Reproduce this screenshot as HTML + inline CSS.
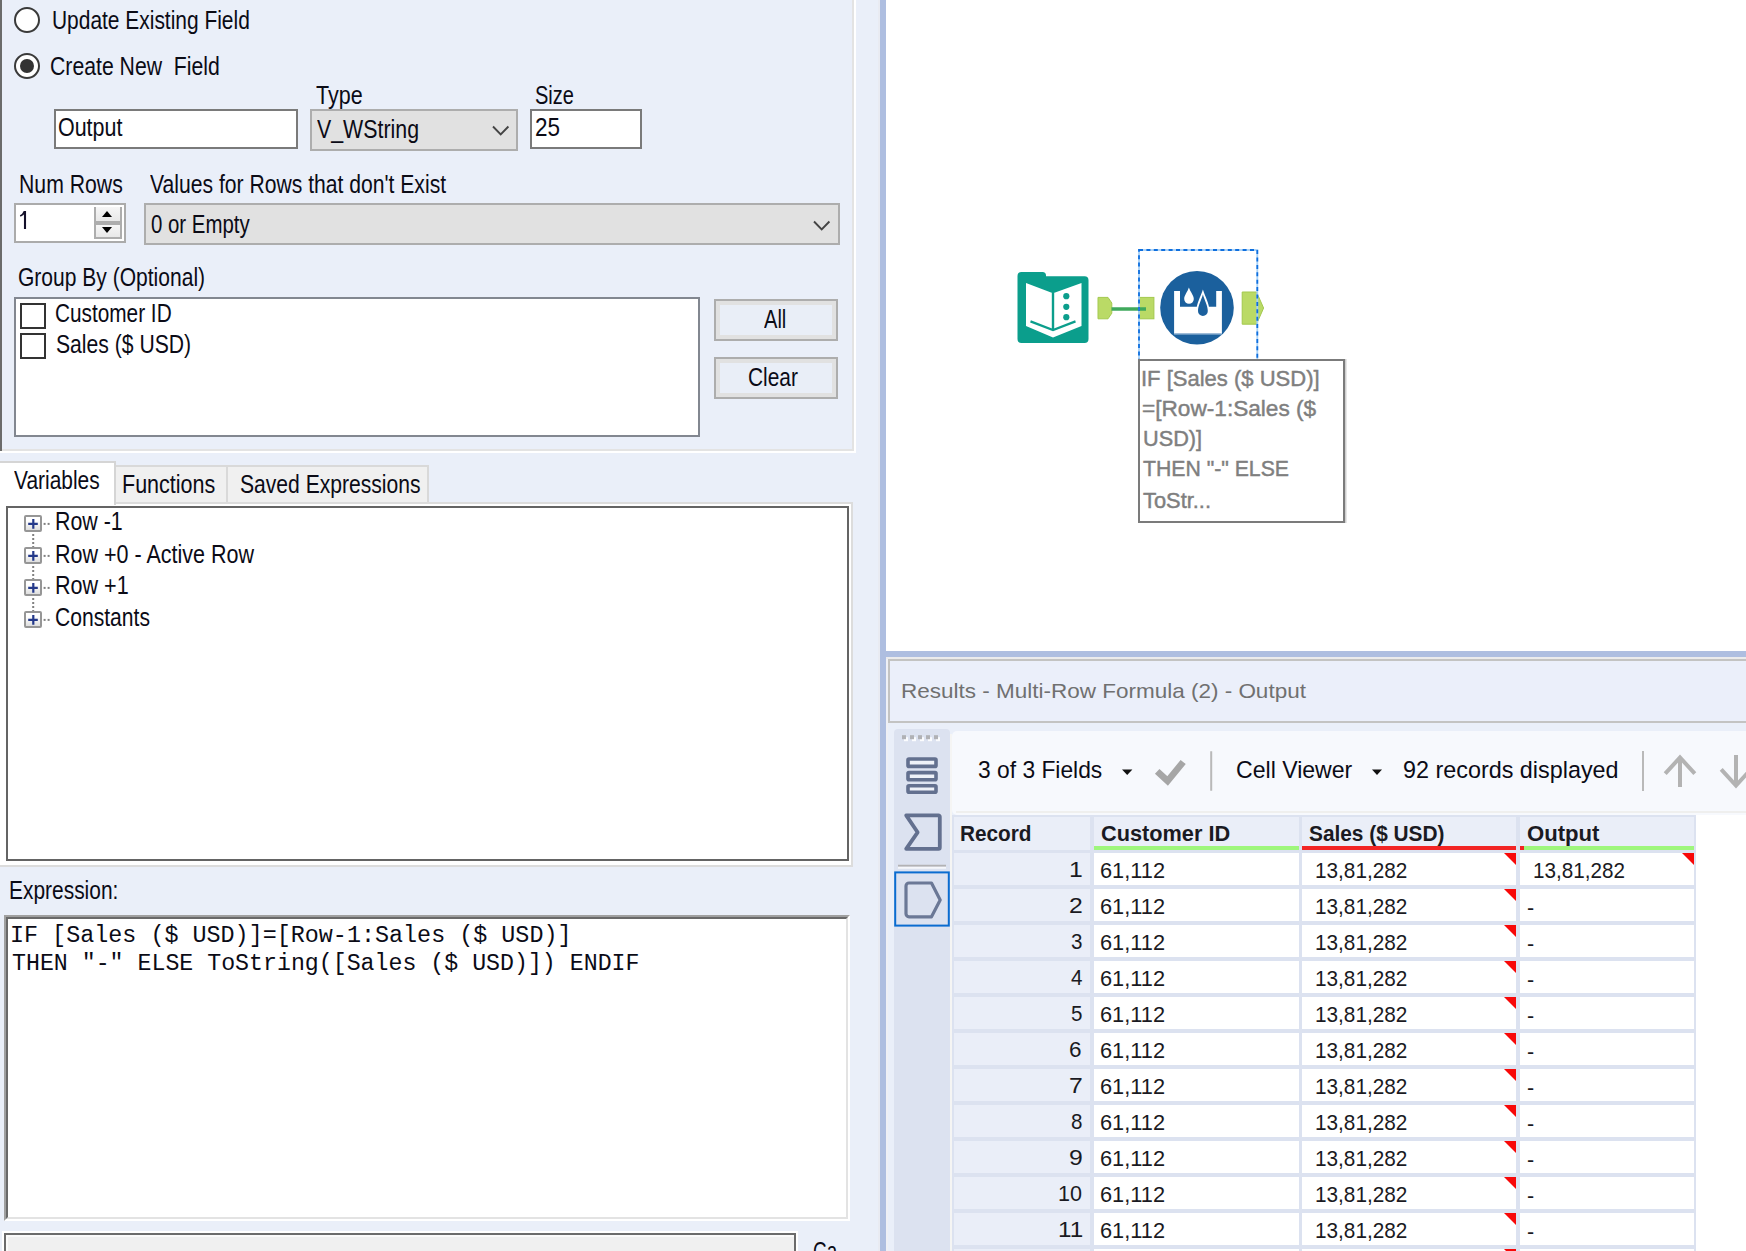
<!DOCTYPE html>
<html><head><meta charset="utf-8"><title>Alteryx Multi-Row Formula</title>
<style>
html,body{margin:0;padding:0}
body{width:1746px;height:1251px;overflow:hidden;position:relative;background:#eaeff9;font-family:"Liberation Sans",sans-serif}
.a{position:absolute;box-sizing:border-box}
.t{position:absolute;white-space:pre;line-height:1;transform-origin:0 0;letter-spacing:0}
.tb{background:#fff;border:2px solid #7a7a7a}
.cb{background:#e1e1e1;border:2px solid #adadad}
.btn{background:#e9eef7;border:2px solid #adadad;box-shadow:inset 0 0 0 4px #e1e1e1}
.chk{background:#fff;border:2px solid #333}
.plus{background:linear-gradient(#fff 30%,#dedede);border:2px solid #969696;border-radius:2px}
.cell{position:absolute;box-sizing:border-box;height:32px;background:#fff}
.rc{background:#eaeef8}
svg{position:absolute;overflow:visible}

</style></head>
<body>
<!-- ===== LEFT CONFIG PANEL ===== -->
<div class="a" style="left:0;top:0;width:2px;height:451px;background:#6b6b6b"></div>
<div class="a" style="left:2px;top:449px;width:852px;height:2px;background:#e3e3e3"></div>
<div class="a" style="left:852px;top:0;width:2px;height:451px;background:#e3e3e3"></div>
<div class="a" style="left:0;top:451px;width:856px;height:2px;background:#fff"></div>
<div class="a" style="left:854px;top:0;width:2px;height:453px;background:#fff"></div>
<!-- radios -->
<div class="a" style="left:14px;top:6.9px;width:26.2px;height:26.2px;border-radius:50%;background:#fff;border:2px solid #3a3a3a"></div>
<div class="a" style="left:14px;top:52.8px;width:26.2px;height:26.2px;border-radius:50%;background:#fff;border:2px solid #3a3a3a"></div>
<div class="a" style="left:20.1px;top:59px;width:13.8px;height:13.8px;border-radius:50%;background:#333"></div>
<!-- inputs -->
<div class="a tb" style="left:54px;top:109px;width:244px;height:40px"></div>
<div class="a cb" style="left:310px;top:109px;width:208px;height:41.5px"></div>
<svg style="left:491.5px;top:125px" width="18" height="12" viewBox="0 0 18 12"><path d="M1 1.5 L8.7 9.4 L16.4 1.5" fill="none" stroke="#444" stroke-width="1.9"/></svg>
<div class="a tb" style="left:530px;top:109px;width:112px;height:40px"></div>
<div class="a" style="left:14px;top:203.4px;width:111.8px;height:39.4px;background:#fff;border:2px solid #ababab"></div>
<div class="a" style="left:94px;top:207.2px;width:28.2px;height:31.6px;background:#adadad"></div>
<div class="a" style="left:96px;top:207.2px;width:24.2px;height:13.8px;background:linear-gradient(#f6f6f6,#e8e8e8)"></div>
<div class="a" style="left:96px;top:224.8px;width:24.2px;height:12px;background:linear-gradient(#f6f6f6,#e8e8e8)"></div>
<svg style="left:102px;top:211px" width="10" height="6" viewBox="0 0 10 6"><path d="M0 6 L5 0 L10 6Z" fill="#000"/></svg>
<svg style="left:102px;top:227px" width="10" height="6" viewBox="0 0 10 6"><path d="M0 0 L5 6 L10 0Z" fill="#000"/></svg>
<svg style="left:0;top:0" width="40" height="240"><path d="M25 211 V229" stroke="#14102a" stroke-width="2.1" fill="none"/><path d="M20.2 216 Q23.4 214.8 24.6 211.4" stroke="#14102a" stroke-width="1.8" fill="none"/></svg>
<div class="a cb" style="left:144px;top:203px;width:696px;height:41.8px"></div>
<svg style="left:813.3px;top:219.5px" width="18" height="12" viewBox="0 0 18 12"><path d="M1 1.5 L8.7 9.4 L16.4 1.5" fill="none" stroke="#444" stroke-width="1.9"/></svg>
<!-- group by list -->
<div class="a" style="left:14px;top:297px;width:686px;height:140px;background:#fff;border:2px solid #828790"></div>
<div class="a chk" style="left:20px;top:303px;width:26px;height:26px"></div>
<div class="a chk" style="left:20px;top:333px;width:26px;height:26px"></div>
<div class="a btn" style="left:714px;top:299px;width:124px;height:41.6px"></div>
<div class="a btn" style="left:714px;top:357px;width:124px;height:41.6px"></div>
<!-- tabs -->
<div class="a" style="left:0;top:501.5px;width:853px;height:365.5px;background:#fff;border:2px solid #dcdcdc;border-left:none"></div>
<div class="a" style="left:114px;top:465.4px;width:113.5px;height:36.4px;background:#f0f0f0;border:2px solid #d9d9d9;border-bottom:none"></div>
<div class="a" style="left:225.5px;top:465.4px;width:203px;height:36.4px;background:#f0f0f0;border:2px solid #d9d9d9;border-bottom:none"></div>
<div class="a" style="left:0;top:461.3px;width:116px;height:43.5px;background:#fff;border-top:2px solid #d5d5d5;border-right:2px solid #d5d5d5"></div>
<div class="a" style="left:0;top:501px;width:114px;height:4px;background:#fff"></div>
<div class="a" style="left:6px;top:505.7px;width:843px;height:355.5px;background:#fff;border:2px solid #646464"></div>
<!-- tree -->
<svg style="left:0;top:0" width="100" height="700">
 <g fill="#808080"><rect x="43.6" y="522.9" width="2" height="2"/><rect x="47.6" y="522.9" width="2" height="2"/><rect x="43.6" y="554.9" width="2" height="2"/><rect x="47.6" y="554.9" width="2" height="2"/><rect x="43.6" y="586.9" width="2" height="2"/><rect x="47.6" y="586.9" width="2" height="2"/><rect x="43.6" y="618.9" width="2" height="2"/><rect x="47.6" y="618.9" width="2" height="2"/><rect x="32.2" y="534.0" width="2" height="2"/><rect x="32.2" y="538.0" width="2" height="2"/><rect x="32.2" y="542.0" width="2" height="2"/><rect x="32.2" y="546.0" width="2" height="2"/><rect x="32.2" y="566.0" width="2" height="2"/><rect x="32.2" y="570.0" width="2" height="2"/><rect x="32.2" y="574.0" width="2" height="2"/><rect x="32.2" y="578.0" width="2" height="2"/><rect x="32.2" y="598.0" width="2" height="2"/><rect x="32.2" y="602.0" width="2" height="2"/><rect x="32.2" y="606.0" width="2" height="2"/><rect x="32.2" y="610.0" width="2" height="2"/></g>
</svg>
<div class="a plus" style="left:24px;top:515.3px;width:17.6px;height:17.2px"></div>
<div class="a plus" style="left:24px;top:547.3px;width:17.6px;height:17.2px"></div>
<div class="a plus" style="left:24px;top:579.3px;width:17.6px;height:17.2px"></div>
<div class="a plus" style="left:24px;top:611.3px;width:17.6px;height:17.2px"></div>
<svg style="left:0;top:0" width="100" height="700">
 <g stroke="#24398a" stroke-width="2.2"><path d="M28.2 523.9 H37.8 M33.3 519.1 V528.6999999999999"/><path d="M28.2 555.9 H37.8 M33.3 551.1 V560.6999999999999"/><path d="M28.2 587.9 H37.8 M33.3 583.1 V592.6999999999999"/><path d="M28.2 619.9 H37.8 M33.3 615.1 V624.6999999999999"/></g>
</svg>
<!-- expression -->
<div class="a" style="left:4px;top:915px;width:846px;height:306px;background:#fff;border-style:solid;border-width:2px;border-color:#a0a0a0 #fff #fff #a0a0a0"></div>
<div class="a" style="left:6px;top:917px;width:842px;height:302px;background:#fff;border-style:solid;border-width:2px;border-color:#696969 #e3e3e3 #e3e3e3 #696969"></div>
<div class="a" style="left:2px;top:1231px;width:796px;height:30px;background:#f0f0f0;border:2px solid #fff"></div>
<div class="a" style="left:4px;top:1233px;width:792px;height:30px;background:#f0f0f0;border:2px solid #6b6b6b;box-shadow:inset 2px 2px 0 #fafafa"></div>

<!-- ===== SPLITTERS / CANVAS ===== -->
<div class="a" style="left:886px;top:0;width:860px;height:651px;background:#fff"></div>
<div class="a" style="left:878px;top:0;width:2px;height:1251px;background:#e9ebf2"></div>
<div class="a" style="left:880px;top:0;width:6px;height:1251px;background:#aebee0"></div>
<div class="a" style="left:886px;top:651px;width:860px;height:6px;background:#aebee0"></div>
<div class="a" style="left:886px;top:657px;width:860px;height:2px;background:#ebebec"></div>
<div class="a" style="left:886px;top:659px;width:2px;height:600px;background:#eff0f5"></div>

<!-- canvas tools -->
<svg style="left:0;top:0" width="1746" height="660">
 <!-- book tool -->
 <path d="M1017.5 276 a4 4 0 0 1 4-4 h21 a3.5 3.5 0 0 1 3.5 3.5 v0.8 h38.5 a4 4 0 0 1 4 4 v58.7 a4 4 0 0 1 -4 4 h-63 a4 4 0 0 1 -4-4 z" fill="#0b9e8c"/>
 <path d="M1026 283 L1053 293.2 L1081.5 283 V326 L1053 337.6 L1026 326 Z" fill="#fff"/>
 <path d="M1053 293 V330" stroke="#0b9e8c" stroke-width="2.4" fill="none"/>
 <path d="M1030.5 321.4 L1053 330 L1075.5 321.4" stroke="#0b9e8c" stroke-width="2.2" fill="none"/>
 <circle cx="1066.3" cy="296.2" r="3.1" fill="#0b9e8c"/><circle cx="1066.3" cy="306.8" r="3.1" fill="#0b9e8c"/><circle cx="1066.3" cy="317.2" r="3.1" fill="#0b9e8c"/>
 <!-- connection -->
 <path d="M1098 297.4 H1108 L1111.8 303 V313.2 L1108 318.8 H1098 Z" fill="#bada66" stroke="#a3c94e" stroke-width="1"/>
 <rect x="1138.6" y="297.4" width="15.3" height="21.4" fill="#bada66" stroke="#a3c94e" stroke-width="1"/>
 <path d="M1111.5 309 H1146" stroke="#3fa95c" stroke-width="3.6" fill="none"/>
 <!-- multi-row tool -->
 <circle cx="1197" cy="307.7" r="36.8" fill="#1b609d"/>
 <path d="M1174.1 290.9 H1180 V306.8 H1216.2 V290.9 H1221.9 V334 H1174.1 Z" fill="#fff"/>
 <path d="M1174.1 334 H1221.9" stroke="#7fa6cb" stroke-width="1.4"/>
 <path d="M1188.9 287.6 C1187.5 292 1184.2 295.5 1184.2 299 a4.7 4.7 0 0 0 9.6 0 C1193.8 295.5 1190.3 292 1188.9 287.6 Z" fill="#fff"/>
 <path d="M1202.9 289.5 C1200.6 297 1196.4 303.5 1196.4 310.8 a6.5 6.5 0 0 0 13 0 C1209.4 303.5 1205.2 297 1202.9 289.5 Z" fill="#fff"/>
 <path d="M1202.9 294.5 C1201.2 300.5 1198 305.5 1198 311 a4.9 4.9 0 0 0 9.8 0 C1207.8 305.5 1204.6 300.5 1202.9 294.5 Z" fill="#1b609d"/>
 <path d="M1242.2 292 H1256.5 L1263.6 308 L1256.5 324.2 H1242.2 Z" fill="#bada66" stroke="#a3c94e" stroke-width="1"/>
 <!-- selection -->
 <rect x="1139" y="250" width="118.3" height="112" fill="none" stroke="#a6d0f7" stroke-width="1.8"/>
 <rect x="1139" y="250" width="118.3" height="112" fill="none" stroke="#0f6fde" stroke-width="1.8" stroke-dasharray="4 3.4"/>
</svg>
<!-- annotation -->
<div class="a" style="left:1138px;top:359px;width:206.5px;height:164px;background:#fff;border:2px solid #7b7b7b;box-shadow:1.5px 0 0 #cfcfcf"></div>

<!-- ===== RESULTS ===== -->
<div class="a" style="left:888px;top:659px;width:870px;height:64px;border:2px solid #c3c3c2;background:#ebeffa"></div>
<div class="a" style="left:894px;top:729px;width:56px;height:530px;background:#dce2f0;border-radius:4px 4px 0 0"></div>
<div class="a" style="left:950px;top:734px;width:2px;height:520px;background:#f5f5f4"></div>
<div class="a" style="left:952px;top:730.8px;width:800px;height:84.2px;background:#f7f9fd;border-radius:5px 0 0 5px"></div>
<div class="a" style="left:956px;top:811.3px;width:800px;height:1.8px;background:#efefee"></div>
<!-- sidebar icons -->
<svg style="left:0;top:0" width="1746" height="1251">
 <g fill="#fbfcfe"><rect x="904" y="737.2" width="4" height="4"/><rect x="912" y="737.2" width="4" height="4"/><rect x="920" y="737.2" width="4" height="4"/><rect x="928" y="737.2" width="4" height="4"/><rect x="936" y="737.2" width="4" height="4"/></g>
 <g fill="#b0b1b5"><rect x="902" y="735.2" width="4" height="4"/><rect x="910" y="735.2" width="4" height="4"/><rect x="918" y="735.2" width="4" height="4"/><rect x="926" y="735.2" width="4" height="4"/><rect x="934" y="735.2" width="4" height="4"/></g>
 <g fill="#eef1f8" stroke="#63708f" stroke-width="3.6">
  <rect x="908" y="759" width="28" height="7.4" rx="1"/>
  <rect x="908" y="772.6" width="28" height="7.2" rx="1"/>
  <rect x="908" y="785.8" width="28" height="6.4" rx="1"/>
 </g>
 <g fill="none" stroke="#63708f" stroke-width="3.8" stroke-linejoin="round">
  <path d="M906.2 815.4 H938.5 a1.3 1.3 0 0 1 1.3 1.3 V847.5 a1.3 1.3 0 0 1 -1.3 1.3 H906.2 L917.6 832.3 Z"/>
 </g>
 <g fill="none" stroke="#6b7896" stroke-width="3.2" stroke-linejoin="round">
  <path d="M906 886 a3 3 0 0 1 3-3 H931.5 L940.2 900 L931.5 916.8 H909 a3 3 0 0 1 -3-3 Z"/>
 </g>
 <path d="M898 865.8 H946" stroke="#b2b2b4" stroke-width="2"/>
 <path d="M898 867.8 H946" stroke="#f6f7fb" stroke-width="2"/>
 <rect x="895.2" y="872.4" width="53.6" height="53.2" fill="none" stroke="#0a6cd0" stroke-width="2"/>
 <!-- toolbar icons -->
 <path d="M1122 769.4 H1132.4 L1127.2 775 Z" fill="#111"/>
 <path d="M1372 769.4 H1382 L1377 775 Z" fill="#111"/>
 <path d="M1157.2 771.3 L1167.6 781 L1183.2 762" fill="none" stroke="#a6a6a6" stroke-width="6.6" stroke-linejoin="miter"/>
 <path d="M1211.2 751.3 V790.8 M1643 751 V791" stroke="#b9b9b9" stroke-width="2"/>
 <g fill="none" stroke="#b3b3b3" stroke-width="4"><path d="M1680 787 V757 M1665.2 773.6 L1680 757.5 L1694.8 773.6"/><path d="M1736 755 V785 M1721.2 769.4 L1736 785.5 L1750.8 769.4"/></g>
</svg>
<!-- table -->
<div class="a" style="left:952px;top:815px;width:744px;height:440px;background:#dce2f0"></div>
<div class="a" style="left:1696px;top:814.5px;width:60px;height:440px;background:#fff"></div>
<div class="a rc" style="left:954px;top:816.5px;width:136px;height:33px"></div>
<div class="a rc" style="left:1094px;top:816.5px;width:204.5px;height:33px;border-bottom:4px solid #9ef67c"></div>
<div class="a rc" style="left:1302px;top:816.5px;width:214px;height:33px;border-bottom:4px solid #f22424"></div>
<div class="a rc" style="left:1520px;top:816.5px;width:174px;height:33px;border-bottom:4px solid #9ef67c"></div>
<div class="a" style="left:1520px;top:845.5px;width:4px;height:4px;background:#f22424"></div>
<div class="cell rc" style="left:954px;top:853px;width:136px"></div><div class="cell" style="left:1094px;top:853px;width:204.5px"></div><div class="cell" style="left:1302px;top:853px;width:214px"></div><div class="cell" style="left:1520px;top:853px;width:174px"></div><svg style="left:1504px;top:853px" width="12" height="12"><path d="M0 0 H12 V12 Z" fill="#f80808"/></svg><svg style="left:1682px;top:853px" width="12" height="12"><path d="M0 0 H12 V12 Z" fill="#f80808"/></svg>
<div class="cell rc" style="left:954px;top:889px;width:136px"></div><div class="cell" style="left:1094px;top:889px;width:204.5px"></div><div class="cell" style="left:1302px;top:889px;width:214px"></div><div class="cell" style="left:1520px;top:889px;width:174px"></div><svg style="left:1504px;top:889px" width="12" height="12"><path d="M0 0 H12 V12 Z" fill="#f80808"/></svg>
<div class="cell rc" style="left:954px;top:925px;width:136px"></div><div class="cell" style="left:1094px;top:925px;width:204.5px"></div><div class="cell" style="left:1302px;top:925px;width:214px"></div><div class="cell" style="left:1520px;top:925px;width:174px"></div><svg style="left:1504px;top:925px" width="12" height="12"><path d="M0 0 H12 V12 Z" fill="#f80808"/></svg>
<div class="cell rc" style="left:954px;top:961px;width:136px"></div><div class="cell" style="left:1094px;top:961px;width:204.5px"></div><div class="cell" style="left:1302px;top:961px;width:214px"></div><div class="cell" style="left:1520px;top:961px;width:174px"></div><svg style="left:1504px;top:961px" width="12" height="12"><path d="M0 0 H12 V12 Z" fill="#f80808"/></svg>
<div class="cell rc" style="left:954px;top:997px;width:136px"></div><div class="cell" style="left:1094px;top:997px;width:204.5px"></div><div class="cell" style="left:1302px;top:997px;width:214px"></div><div class="cell" style="left:1520px;top:997px;width:174px"></div><svg style="left:1504px;top:997px" width="12" height="12"><path d="M0 0 H12 V12 Z" fill="#f80808"/></svg>
<div class="cell rc" style="left:954px;top:1033px;width:136px"></div><div class="cell" style="left:1094px;top:1033px;width:204.5px"></div><div class="cell" style="left:1302px;top:1033px;width:214px"></div><div class="cell" style="left:1520px;top:1033px;width:174px"></div><svg style="left:1504px;top:1033px" width="12" height="12"><path d="M0 0 H12 V12 Z" fill="#f80808"/></svg>
<div class="cell rc" style="left:954px;top:1069px;width:136px"></div><div class="cell" style="left:1094px;top:1069px;width:204.5px"></div><div class="cell" style="left:1302px;top:1069px;width:214px"></div><div class="cell" style="left:1520px;top:1069px;width:174px"></div><svg style="left:1504px;top:1069px" width="12" height="12"><path d="M0 0 H12 V12 Z" fill="#f80808"/></svg>
<div class="cell rc" style="left:954px;top:1105px;width:136px"></div><div class="cell" style="left:1094px;top:1105px;width:204.5px"></div><div class="cell" style="left:1302px;top:1105px;width:214px"></div><div class="cell" style="left:1520px;top:1105px;width:174px"></div><svg style="left:1504px;top:1105px" width="12" height="12"><path d="M0 0 H12 V12 Z" fill="#f80808"/></svg>
<div class="cell rc" style="left:954px;top:1141px;width:136px"></div><div class="cell" style="left:1094px;top:1141px;width:204.5px"></div><div class="cell" style="left:1302px;top:1141px;width:214px"></div><div class="cell" style="left:1520px;top:1141px;width:174px"></div><svg style="left:1504px;top:1141px" width="12" height="12"><path d="M0 0 H12 V12 Z" fill="#f80808"/></svg>
<div class="cell rc" style="left:954px;top:1177px;width:136px"></div><div class="cell" style="left:1094px;top:1177px;width:204.5px"></div><div class="cell" style="left:1302px;top:1177px;width:214px"></div><div class="cell" style="left:1520px;top:1177px;width:174px"></div><svg style="left:1504px;top:1177px" width="12" height="12"><path d="M0 0 H12 V12 Z" fill="#f80808"/></svg>
<div class="cell rc" style="left:954px;top:1213px;width:136px"></div><div class="cell" style="left:1094px;top:1213px;width:204.5px"></div><div class="cell" style="left:1302px;top:1213px;width:214px"></div><div class="cell" style="left:1520px;top:1213px;width:174px"></div><svg style="left:1504px;top:1213px" width="12" height="12"><path d="M0 0 H12 V12 Z" fill="#f80808"/></svg>
<div class="cell rc" style="left:954px;top:1249px;width:136px"></div><div class="cell" style="left:1094px;top:1249px;width:204.5px"></div><div class="cell" style="left:1302px;top:1249px;width:214px"></div><div class="cell" style="left:1520px;top:1249px;width:174px"></div><svg style="left:1504px;top:1249px" width="12" height="12"><path d="M0 0 H12 V12 Z" fill="#f80808"/></svg>

<span class="t" style="left:51.68px;top:8.41px;font-size:25.5px;font-family:'Liberation Sans';font-weight:400;color:#0b0b16;transform:scaleX(0.8209)">Update Existing Field</span>
<span class="t" style="left:50.17px;top:53.91px;font-size:25.5px;font-family:'Liberation Sans';font-weight:400;color:#0b0b16;transform:scaleX(0.8321)">Create New  Field</span>
<span class="t" style="left:316.00px;top:83.41px;font-size:25.5px;font-family:'Liberation Sans';font-weight:400;color:#0b0b16;transform:scaleX(0.8439)">Type</span>
<span class="t" style="left:535.22px;top:83.41px;font-size:25.5px;font-family:'Liberation Sans';font-weight:400;color:#0b0b16;transform:scaleX(0.7847)">Size</span>
<span class="t" style="left:58.16px;top:115.41px;font-size:25.5px;font-family:'Liberation Sans';font-weight:400;color:#0b0b16;transform:scaleX(0.8414)">Output</span>
<span class="t" style="left:317.00px;top:117.41px;font-size:25.5px;font-family:'Liberation Sans';font-weight:400;color:#0b0b16;transform:scaleX(0.8369)">V_WString</span>
<span class="t" style="left:535.12px;top:115.41px;font-size:25.5px;font-family:'Liberation Sans';font-weight:400;color:#0b0b16;transform:scaleX(0.8829)">25</span>
<span class="t" style="left:19.34px;top:171.91px;font-size:25.5px;font-family:'Liberation Sans';font-weight:400;color:#0b0b16;transform:scaleX(0.8324)">Num Rows</span>
<span class="t" style="left:150.00px;top:171.91px;font-size:25.5px;font-family:'Liberation Sans';font-weight:400;color:#0b0b16;transform:scaleX(0.8286)">Values for Rows that don&#x27;t Exist</span>
<span class="t" style="left:151.20px;top:211.91px;font-size:25.5px;font-family:'Liberation Sans';font-weight:400;color:#0b0b16;transform:scaleX(0.7997)">0 or Empty</span>
<span class="t" style="left:18.18px;top:265.41px;font-size:25.5px;font-family:'Liberation Sans';font-weight:400;color:#0b0b16;transform:scaleX(0.8249)">Group By (Optional)</span>
<span class="t" style="left:54.68px;top:301.41px;font-size:25.5px;font-family:'Liberation Sans';font-weight:400;color:#0b0b16;transform:scaleX(0.8151)">Customer ID</span>
<span class="t" style="left:56.17px;top:331.91px;font-size:25.5px;font-family:'Liberation Sans';font-weight:400;color:#0b0b16;transform:scaleX(0.8288)">Sales ($ USD)</span>
<span class="t" style="left:764.00px;top:307.41px;font-size:25.5px;font-family:'Liberation Sans';font-weight:400;color:#0b0b16;transform:scaleX(0.7873)">All</span>
<span class="t" style="left:747.68px;top:365.41px;font-size:25.5px;font-family:'Liberation Sans';font-weight:400;color:#0b0b16;transform:scaleX(0.8189)">Clear</span>
<span class="t" style="left:14.00px;top:468.41px;font-size:25.5px;font-family:'Liberation Sans';font-weight:400;color:#0b0b16;transform:scaleX(0.8199)">Variables</span>
<span class="t" style="left:122.31px;top:471.91px;font-size:25.5px;font-family:'Liberation Sans';font-weight:400;color:#0b0b16;transform:scaleX(0.8441)">Functions</span>
<span class="t" style="left:239.67px;top:471.91px;font-size:25.5px;font-family:'Liberation Sans';font-weight:400;color:#0b0b16;transform:scaleX(0.8267)">Saved Expressions</span>
<span class="t" style="left:55.32px;top:509.41px;font-size:25.5px;font-family:'Liberation Sans';font-weight:400;color:#0b0b16;transform:scaleX(0.8377)">Row -1</span>
<span class="t" style="left:55.31px;top:541.91px;font-size:25.5px;font-family:'Liberation Sans';font-weight:400;color:#0b0b16;transform:scaleX(0.8434)">Row +0 - Active Row</span>
<span class="t" style="left:55.31px;top:573.41px;font-size:25.5px;font-family:'Liberation Sans';font-weight:400;color:#0b0b16;transform:scaleX(0.8454)">Row +1</span>
<span class="t" style="left:54.67px;top:605.41px;font-size:25.5px;font-family:'Liberation Sans';font-weight:400;color:#0b0b16;transform:scaleX(0.8270)">Constants</span>
<span class="t" style="left:9.36px;top:878.41px;font-size:25.5px;font-family:'Liberation Sans';font-weight:400;color:#0b0b16;transform:scaleX(0.8208)">Expression:</span>
<span class="t" style="left:813.26px;top:1239.41px;font-size:25.5px;font-family:'Liberation Sans';font-weight:400;color:#0b0b16;transform:scaleX(0.7404)">Ca</span>
<span class="t" style="left:9.99px;top:925.14px;font-size:23.3px;font-family:'Liberation Mono';font-weight:400;color:#0b0b16;transform:scaleX(1.0041)">IF [Sales ($ USD)]=[Row-1:Sales ($ USD)]</span>
<span class="t" style="left:12.00px;top:953.14px;font-size:23.3px;font-family:'Liberation Mono';font-weight:400;color:#0b0b16;transform:scaleX(0.9974)">THEN &quot;-&quot; ELSE ToString([Sales ($ USD)]) ENDIF</span>
<span class="t" style="left:1141.00px;top:368.08px;font-size:22px;font-family:'Liberation Sans';font-weight:400;color:#7f7f7f;-webkit-text-stroke:0.45px #7f7f7f;transform:scaleX(1.0007)">IF [Sales ($ USD)]</span>
<span class="t" style="left:1142.47px;top:398.28px;font-size:22px;font-family:'Liberation Sans';font-weight:400;color:#7f7f7f;-webkit-text-stroke:0.45px #7f7f7f;transform:scaleX(1.0285)">=[Row-1:Sales ($</span>
<span class="t" style="left:1142.51px;top:427.78px;font-size:22px;font-family:'Liberation Sans';font-weight:400;color:#7f7f7f;-webkit-text-stroke:0.45px #7f7f7f;transform:scaleX(0.9866)">USD)]</span>
<span class="t" style="left:1143.00px;top:458.08px;font-size:22px;font-family:'Liberation Sans';font-weight:400;color:#7f7f7f;-webkit-text-stroke:0.45px #7f7f7f;transform:scaleX(0.9645)">THEN &quot;-&quot; ELSE</span>
<span class="t" style="left:1143.00px;top:489.68px;font-size:22px;font-family:'Liberation Sans';font-weight:400;color:#7f7f7f;-webkit-text-stroke:0.45px #7f7f7f;transform:scaleX(0.9932)">ToStr...</span>
<span class="t" style="left:900.93px;top:680.22px;font-size:21px;font-family:'Liberation Sans';font-weight:400;color:#707070;transform:scaleX(1.0709)">Results - Multi-Row Formula (2) - Output</span>
<span class="t" style="left:978.00px;top:758.26px;font-size:24.5px;font-family:'Liberation Sans';font-weight:400;color:#0b0b16;transform:scaleX(0.9309)">3 of 3 Fields</span>
<span class="t" style="left:1236.06px;top:758.26px;font-size:24.5px;font-family:'Liberation Sans';font-weight:400;color:#0b0b16;transform:scaleX(0.9420)">Cell Viewer</span>
<span class="t" style="left:1403.05px;top:758.26px;font-size:24.5px;font-family:'Liberation Sans';font-weight:400;color:#0b0b16;transform:scaleX(0.9534)">92 records displayed</span>
<span class="t" style="left:960.07px;top:822.84px;font-size:22.4px;font-family:'Liberation Sans';font-weight:700;color:#1a1a22;transform:scaleX(0.9276)">Record</span>
<span class="t" style="left:1101.00px;top:822.84px;font-size:22.4px;font-family:'Liberation Sans';font-weight:700;color:#1a1a22;transform:scaleX(0.9703)">Customer ID</span>
<span class="t" style="left:1309.00px;top:822.84px;font-size:22.4px;font-family:'Liberation Sans';font-weight:700;color:#1a1a22;transform:scaleX(0.9302)">Sales ($ USD)</span>
<span class="t" style="left:1527.00px;top:822.84px;font-size:22.4px;font-family:'Liberation Sans';font-weight:700;color:#1a1a22;transform:scaleX(0.9878)">Output</span>
<span class="t" style="left:1069.35px;top:859.80px;font-size:21.5px;font-family:'Liberation Sans';font-weight:400;color:#1a1a22;transform:scaleX(1.1500)">1</span>
<span class="t" style="left:1099.99px;top:860.80px;font-size:21.5px;font-family:'Liberation Sans';font-weight:400;color:#1a1a22;transform:scaleX(1.0128)">61,112</span>
<span class="t" style="left:1314.53px;top:860.80px;font-size:21.5px;font-family:'Liberation Sans';font-weight:400;color:#1a1a22;transform:scaleX(0.9659)">13,81,282</span>
<span class="t" style="left:1533.04px;top:860.80px;font-size:21.5px;font-family:'Liberation Sans';font-weight:400;color:#1a1a22;transform:scaleX(0.9606)">13,81,282</span>
<span class="t" style="left:1069.35px;top:895.80px;font-size:21.5px;font-family:'Liberation Sans';font-weight:400;color:#1a1a22;transform:scaleX(1.1500)">2</span>
<span class="t" style="left:1099.99px;top:896.80px;font-size:21.5px;font-family:'Liberation Sans';font-weight:400;color:#1a1a22;transform:scaleX(1.0128)">61,112</span>
<span class="t" style="left:1314.53px;top:896.80px;font-size:21.5px;font-family:'Liberation Sans';font-weight:400;color:#1a1a22;transform:scaleX(0.9659)">13,81,282</span>
<span class="t" style="left:1527.00px;top:898.30px;font-size:21.5px;font-family:'Liberation Sans';font-weight:400;color:#1a1a22;transform:scaleX(1.0000)">-</span>
<span class="t" style="left:1070.50px;top:931.80px;font-size:21.5px;font-family:'Liberation Sans';font-weight:400;color:#1a1a22;transform:scaleX(0.9583)">3</span>
<span class="t" style="left:1099.99px;top:932.80px;font-size:21.5px;font-family:'Liberation Sans';font-weight:400;color:#1a1a22;transform:scaleX(1.0128)">61,112</span>
<span class="t" style="left:1314.53px;top:932.80px;font-size:21.5px;font-family:'Liberation Sans';font-weight:400;color:#1a1a22;transform:scaleX(0.9659)">13,81,282</span>
<span class="t" style="left:1527.00px;top:934.30px;font-size:21.5px;font-family:'Liberation Sans';font-weight:400;color:#1a1a22;transform:scaleX(1.0000)">-</span>
<span class="t" style="left:1070.50px;top:967.80px;font-size:21.5px;font-family:'Liberation Sans';font-weight:400;color:#1a1a22;transform:scaleX(0.9583)">4</span>
<span class="t" style="left:1099.99px;top:968.80px;font-size:21.5px;font-family:'Liberation Sans';font-weight:400;color:#1a1a22;transform:scaleX(1.0128)">61,112</span>
<span class="t" style="left:1314.53px;top:968.80px;font-size:21.5px;font-family:'Liberation Sans';font-weight:400;color:#1a1a22;transform:scaleX(0.9659)">13,81,282</span>
<span class="t" style="left:1527.00px;top:970.30px;font-size:21.5px;font-family:'Liberation Sans';font-weight:400;color:#1a1a22;transform:scaleX(1.0000)">-</span>
<span class="t" style="left:1070.50px;top:1003.80px;font-size:21.5px;font-family:'Liberation Sans';font-weight:400;color:#1a1a22;transform:scaleX(0.9583)">5</span>
<span class="t" style="left:1099.99px;top:1004.80px;font-size:21.5px;font-family:'Liberation Sans';font-weight:400;color:#1a1a22;transform:scaleX(1.0128)">61,112</span>
<span class="t" style="left:1314.53px;top:1004.80px;font-size:21.5px;font-family:'Liberation Sans';font-weight:400;color:#1a1a22;transform:scaleX(0.9659)">13,81,282</span>
<span class="t" style="left:1527.00px;top:1006.30px;font-size:21.5px;font-family:'Liberation Sans';font-weight:400;color:#1a1a22;transform:scaleX(1.0000)">-</span>
<span class="t" style="left:1069.45px;top:1039.80px;font-size:21.5px;font-family:'Liberation Sans';font-weight:400;color:#1a1a22;transform:scaleX(1.0455)">6</span>
<span class="t" style="left:1099.99px;top:1040.80px;font-size:21.5px;font-family:'Liberation Sans';font-weight:400;color:#1a1a22;transform:scaleX(1.0128)">61,112</span>
<span class="t" style="left:1314.53px;top:1040.80px;font-size:21.5px;font-family:'Liberation Sans';font-weight:400;color:#1a1a22;transform:scaleX(0.9659)">13,81,282</span>
<span class="t" style="left:1527.00px;top:1042.30px;font-size:21.5px;font-family:'Liberation Sans';font-weight:400;color:#1a1a22;transform:scaleX(1.0000)">-</span>
<span class="t" style="left:1069.35px;top:1075.80px;font-size:21.5px;font-family:'Liberation Sans';font-weight:400;color:#1a1a22;transform:scaleX(1.1500)">7</span>
<span class="t" style="left:1099.99px;top:1076.80px;font-size:21.5px;font-family:'Liberation Sans';font-weight:400;color:#1a1a22;transform:scaleX(1.0128)">61,112</span>
<span class="t" style="left:1314.53px;top:1076.80px;font-size:21.5px;font-family:'Liberation Sans';font-weight:400;color:#1a1a22;transform:scaleX(0.9659)">13,81,282</span>
<span class="t" style="left:1527.00px;top:1078.30px;font-size:21.5px;font-family:'Liberation Sans';font-weight:400;color:#1a1a22;transform:scaleX(1.0000)">-</span>
<span class="t" style="left:1070.50px;top:1111.80px;font-size:21.5px;font-family:'Liberation Sans';font-weight:400;color:#1a1a22;transform:scaleX(0.9583)">8</span>
<span class="t" style="left:1099.99px;top:1112.80px;font-size:21.5px;font-family:'Liberation Sans';font-weight:400;color:#1a1a22;transform:scaleX(1.0128)">61,112</span>
<span class="t" style="left:1314.53px;top:1112.80px;font-size:21.5px;font-family:'Liberation Sans';font-weight:400;color:#1a1a22;transform:scaleX(0.9659)">13,81,282</span>
<span class="t" style="left:1527.00px;top:1114.30px;font-size:21.5px;font-family:'Liberation Sans';font-weight:400;color:#1a1a22;transform:scaleX(1.0000)">-</span>
<span class="t" style="left:1069.35px;top:1147.80px;font-size:21.5px;font-family:'Liberation Sans';font-weight:400;color:#1a1a22;transform:scaleX(1.1500)">9</span>
<span class="t" style="left:1099.99px;top:1148.80px;font-size:21.5px;font-family:'Liberation Sans';font-weight:400;color:#1a1a22;transform:scaleX(1.0128)">61,112</span>
<span class="t" style="left:1314.53px;top:1148.80px;font-size:21.5px;font-family:'Liberation Sans';font-weight:400;color:#1a1a22;transform:scaleX(0.9659)">13,81,282</span>
<span class="t" style="left:1527.00px;top:1150.30px;font-size:21.5px;font-family:'Liberation Sans';font-weight:400;color:#1a1a22;transform:scaleX(1.0000)">-</span>
<span class="t" style="left:1058.00px;top:1183.80px;font-size:21.5px;font-family:'Liberation Sans';font-weight:400;color:#1a1a22;transform:scaleX(1.0019)">10</span>
<span class="t" style="left:1099.99px;top:1184.80px;font-size:21.5px;font-family:'Liberation Sans';font-weight:400;color:#1a1a22;transform:scaleX(1.0128)">61,112</span>
<span class="t" style="left:1314.53px;top:1184.80px;font-size:21.5px;font-family:'Liberation Sans';font-weight:400;color:#1a1a22;transform:scaleX(0.9659)">13,81,282</span>
<span class="t" style="left:1527.00px;top:1186.30px;font-size:21.5px;font-family:'Liberation Sans';font-weight:400;color:#1a1a22;transform:scaleX(1.0000)">-</span>
<span class="t" style="left:1057.87px;top:1219.80px;font-size:21.5px;font-family:'Liberation Sans';font-weight:400;color:#1a1a22;transform:scaleX(1.1296)">11</span>
<span class="t" style="left:1099.99px;top:1220.80px;font-size:21.5px;font-family:'Liberation Sans';font-weight:400;color:#1a1a22;transform:scaleX(1.0128)">61,112</span>
<span class="t" style="left:1314.53px;top:1220.80px;font-size:21.5px;font-family:'Liberation Sans';font-weight:400;color:#1a1a22;transform:scaleX(0.9659)">13,81,282</span>
<span class="t" style="left:1527.00px;top:1222.30px;font-size:21.5px;font-family:'Liberation Sans';font-weight:400;color:#1a1a22;transform:scaleX(1.0000)">-</span>
</body></html>
